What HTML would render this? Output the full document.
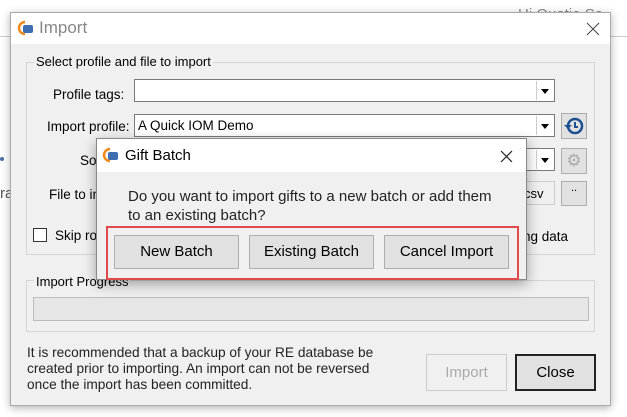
<!DOCTYPE html>
<html><head><style>
*{box-sizing:border-box;margin:0;padding:0}
body{width:627px;height:417px;background:#fff;position:relative;overflow:hidden;font-family:"Liberation Sans",sans-serif;font-size:12.5px;color:#000}
.a{position:absolute}
.combo{position:absolute;background:#fff;border:1px solid #7a7a7a;height:23px}
.combo .dd{position:absolute;right:1px;top:1px;width:17px;height:19px;border-left:1px solid #ccc;background:#fff}
.combo .dd:after{content:"";position:absolute;left:4px;top:8px;border-left:4px solid transparent;border-right:4px solid transparent;border-top:5px solid #000}
.btn{position:absolute;background:#e1e1e1;border:1px solid #adadad;text-align:center;font-size:15px}
.grp{position:absolute;border:1px solid #d5d5d5}
.lbl{position:absolute;background:#f0f0f0;padding:0 2px;color:#000;font-size:13px}
</style></head><body>
<div class="a" style="left:0;top:36px;width:10px;height:1px;background:#ccc"></div>
<div class="a" style="left:611px;top:36px;width:16px;height:1px;background:#ccc"></div>
<div class="a" style="left:518px;top:6px;font-size:15px;color:#888">Hi Quatie So</div>
<div class="a" style="left:0;top:185px;font-size:15px;color:#555">ra</div>
<div class="a" style="left:0;top:157px;width:4px;height:4px;background:#4a6fa5;border-radius:2px"></div>
<div class="a" style="left:10px;top:12px;width:601px;height:394px;background:#f0f0f0;border:1px solid #aaa;box-shadow:0 2px 8px rgba(0,0,0,.3)">
 <div class="a" style="left:0;top:0;width:599px;height:31px;background:#fff"></div>
 <svg class="a" style="left:5px;top:7px" width="18" height="16" viewBox="0 0 18 16"><path d="M9 2A6 6 0 1 0 9 14" stroke="#f08a1c" stroke-width="2.5" fill="none"/><rect x="7" y="5" width="10" height="8" rx="2" fill="#3f6fb0"/></svg>
 <div class="a" style="left:28px;top:5px;font-size:17px;color:#888">Import</div>
 <svg class="a" style="left:575px;top:9px" width="14" height="14"><path d="M1 1L13 13M13 1L1 13" stroke="#444" stroke-width="1"/></svg>
</div>
<div class="grp" style="left:26px;top:62px;width:569px;height:193px"></div>
<div class="lbl" style="left:34px;top:54px">Select profile and file to import</div>
<div class="a" style="left:53px;top:87px;font-size:13.5px">Profile tags:</div>
<div class="combo" style="left:134px;top:79px;width:421px"><div class="dd"></div></div>
<div class="a" style="left:47px;top:119px;font-size:13.5px">Import profile:</div>
<div class="combo" style="left:134px;top:114px;width:421px"><div class="dd"></div><span class="a" style="left:3px;top:3px;font-size:13.5px">A Quick IOM Demo</span></div>
<div class="btn" style="left:561px;top:113px;width:26px;height:26px"><svg width="22" height="22" viewBox="0 0 22 22"><circle cx="12" cy="12" r="7" stroke="#1b4f8f" stroke-width="2.5" fill="none"/><path d="M12 8v5h3" stroke="#1b4f8f" stroke-width="2" fill="none"/><path d="M1 11l4 4 4-4z" fill="#1b4f8f"/></svg></div>
<div class="a" style="left:80px;top:153px;font-size:13.5px">So</div>
<div class="combo" style="left:520px;top:148px;width:35px"><div class="dd"></div></div>
<div class="btn" style="left:561px;top:148px;width:26px;height:26px;color:#aaa;font-size:17px;line-height:24px">⚙</div>
<div class="a" style="left:49px;top:187px;font-size:13.5px">File to im</div>
<div class="a" style="left:520px;top:181px;width:35px;height:24px;border:1px solid #ccc;border-left:none;background:#f0f0f0;font-size:13px;padding:4px 0 0 4px">csv</div>
<div class="btn" style="left:561px;top:181px;width:26px;height:25px;font-size:11px">..</div>
<div class="a" style="left:33px;top:228px;width:14px;height:14px;border:1px solid #333;background:#fff"></div>
<div class="a" style="left:55px;top:228px;font-size:13.5px">Skip ro</div>
<div class="a" style="left:520px;top:229px;font-size:13.5px">ing data</div>
<div class="grp" style="left:26px;top:280px;width:569px;height:52px"></div>
<div class="lbl" style="left:34px;top:274px">Import Progress</div>
<div class="a" style="left:33px;top:297px;width:556px;height:24px;border:1px solid #bcbcbc;background:#e6e6e6"></div>
<div class="a" style="left:27px;top:345px;font-size:13.7px;line-height:16px;color:#222">It is recommended that a backup of your RE database be<br>created prior to importing. An import can not be reversed<br>once the import has been committed.</div>
<div class="btn" style="left:426px;top:354px;width:81px;height:37px;line-height:35px;color:#aaa;background:#f0f0f0;border-color:#ccc">Import</div>
<div class="btn" style="left:515px;top:354px;width:81px;height:37px;line-height:33px;border:2px solid #222">Close</div>
<div class="a" style="left:96px;top:138px;width:431px;height:142px;background:#f0f0f0;border:1px solid #888;box-shadow:0 4px 12px rgba(0,0,0,.35)">
 <div class="a" style="left:0;top:0;width:429px;height:33px;background:#fff"></div>
 <svg class="a" style="left:4px;top:8px" width="18" height="16" viewBox="0 0 18 16"><path d="M9 2A6 6 0 1 0 9 14" stroke="#f08a1c" stroke-width="2.5" fill="none"/><rect x="7" y="5" width="10" height="8" rx="2" fill="#3f6fb0"/></svg>
 <div class="a" style="left:28px;top:8px;font-size:15px">Gift Batch</div>
 <svg class="a" style="left:403px;top:11px" width="13" height="13"><path d="M1 1L12 12M12 1L1 12" stroke="#222" stroke-width="1.2"/></svg>
 <div class="a" style="left:31px;top:48px;font-size:15px;line-height:19px;color:#222">Do you want to import gifts to a new batch or add them<br>to an existing batch?</div>
</div>
<div class="a" style="left:106px;top:226px;width:413px;height:54px;border:2px solid #e04a4a"></div>
<div class="btn" style="left:114px;top:235px;width:125px;height:34px;line-height:32px">New Batch</div>
<div class="btn" style="left:249px;top:235px;width:125px;height:34px;line-height:32px">Existing Batch</div>
<div class="btn" style="left:384px;top:235px;width:125px;height:34px;line-height:32px">Cancel Import</div>
</body></html>
